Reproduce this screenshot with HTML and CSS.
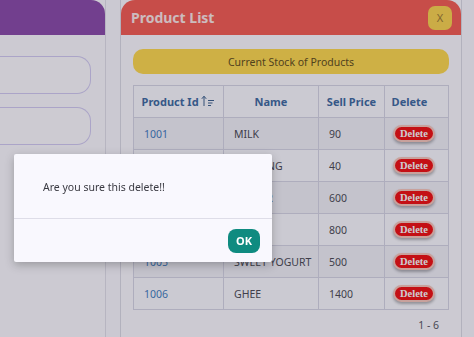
FILE: index.html
```html
<!DOCTYPE html>
<html lang="en">
<head>
    <meta charset="UTF-8">
    <meta name="viewport" content="width=device-width, initial-scale=1.0">
    <title>Product List</title>
    <link rel="stylesheet" href="styles.css">
</head>
<body>
    <div class="page">
        <div class="panel left-panel">
            <div class="panel-header purple"></div>
            <div class="panel-body">
                <div class="field"></div>
                <div class="field"></div>
            </div>
        </div>

        <div class="panel right-panel">
            <div class="panel-header red">
                <span class="panel-title">Product List</span>
                <button class="close-btn">X</button>
            </div>
            <div class="panel-body">
                <div class="stock-bar">Current Stock of Products</div>
                <table class="product-table">
                    <thead>
                        <tr>
                            <th class="col-id">Product Id
                                <svg class="sort-icon" width="14" height="12" viewBox="0 0 14 12">
                                    <path d="M3 11V1.5M0.8 3.8L3 1.2L5.2 3.8" fill="none" stroke="#3a5f8c" stroke-width="1"/>
                                    <path d="M7 5.5h6M7 8h4.5M7 10.5h3" fill="none" stroke="#3a5f8c" stroke-width="1"/>
                                </svg>
                            </th>
                            <th class="col-name">Name</th>
                            <th class="col-price">Sell Price</th>
                            <th class="col-del">Delete</th>
                        </tr>
                    </thead>
                    <tbody>
                        <tr><td class="pid">1001</td><td>MILK</td><td>90</td><td class="del-cell"><button class="del-btn">Delete</button></td></tr>
                        <tr><td class="pid">1002</td><td>PUDDING</td><td>40</td><td class="del-cell"><button class="del-btn">Delete</button></td></tr>
                        <tr><td class="pid">1003</td><td>BUTTER</td><td>600</td><td class="del-cell"><button class="del-btn">Delete</button></td></tr>
                        <tr><td class="pid">1004</td><td>CHEESE</td><td>800</td><td class="del-cell"><button class="del-btn">Delete</button></td></tr>
                        <tr><td class="pid">1005</td><td>SWEET YOGURT</td><td>500</td><td class="del-cell"><button class="del-btn">Delete</button></td></tr>
                        <tr><td class="pid">1006</td><td>GHEE</td><td>1400</td><td class="del-cell"><button class="del-btn">Delete</button></td></tr>
                    </tbody>
                </table>
                <div class="pager">1 - 6</div>
            </div>
        </div>
    </div>

    <div class="overlay"></div>

    <div class="dialog">
        <div class="dialog-body">Are you sure this delete!!</div>
        <div class="dialog-footer">
            <button class="ok-btn">OK</button>
        </div>
    </div>
</body>
</html>
```

FILE: styles.css
```css
* {
    margin: 0;
    padding: 0;
    box-sizing: border-box;
}

body {
    font-family: 'Noto Sans', 'Open Sans', sans-serif;
    background: #fbfaff;
    width: 474px;
    height: 337px;
    overflow: hidden;
}

.page {
    display: flex;
    gap: 14px;
    height: 337px;
}

.panel {
    display: flex;
    flex-direction: column;
    background: #fdfcff;
}

.left-panel {
    width: 106px;
    border-right: 1px solid #e2e1ea;
}

.right-panel {
    width: 342px;
    border-left: 1px solid #dcdbe5;
    border-right: 1px solid #dcdbe5;
}

.panel-header {
    height: 35px;
    display: flex;
    align-items: center;
    justify-content: space-between;
    padding: 0 9px 0 10px;
}

.panel-header.purple {
    background: #8a4aa8;
    border-top-right-radius: 14px;
}

.panel-header.red {
    background: #f65c50;
    border-top-left-radius: 14px;
    border-top-right-radius: 14px;
}

.panel-title {
    color: #fde9e6;
    font-size: 14px;
    font-weight: bold;
}

.close-btn {
    width: 24px;
    height: 24px;
    border: none;
    border-radius: 7px;
    background: #fbd54c;
    color: #9a7830;
    font-family: inherit;
    font-size: 11px;
}

.left-panel .panel-body {
    padding: 21px 14px 0 0;
    display: flex;
    flex-direction: column;
    gap: 13px;
}

.field {
    height: 38px;
    margin-left: -20px;
    border: 1px solid #d2cbf2;
    border-left: none;
    border-radius: 0 14px 14px 0;
    background: #fefdff;
}

.right-panel .panel-body {
    padding: 14px 12px 0 12px;
}

.stock-bar {
    height: 25px;
    border-radius: 10px;
    background: #ffda4b;
    color: #5e4c18;
    font-size: 10.5px;
    display: flex;
    align-items: center;
    justify-content: center;
}

.product-table {
    margin-top: 11px;
    width: 100%;
    border-collapse: collapse;
    font-size: 10.5px;
    border: 1px solid #d6d6e4;
}

.product-table th,
.product-table td {
    border: 1px solid #d6d6e4;
    height: 32px;
}

.product-table th {
    background: #fbfcff;
    color: #3d6aa0;
    font-weight: bold;
    font-size: 11px;
    text-align: center;
}

.col-id { width: 90px; }
.col-name { width: 95px; }
.col-price { width: 66px; }
.col-del { padding-right: 14px; }

.sort-icon {
    vertical-align: -1px;
}

.product-table td {
    padding-left: 10px;
    color: #4a4a52;
    background: #fcfcff;
}

.product-table tbody tr:nth-child(odd) td {
    background: #f2f2f8;
}

.product-table td.pid {
    color: #3f7cc0;
}

.product-table td.del-cell {
    padding-left: 0;
    text-align: center;
    padding-right: 5px;
}

.del-btn {
    background: #f20e0e;
    color: #fff;
    border: 2px solid #f8c7ba;
    border-radius: 9px;
    font-family: 'Liberation Serif', serif;
    font-weight: bold;
    font-size: 10.5px;
    padding: 0 5px;
    height: 17px;
    box-shadow: 0 2px 3px rgba(0, 0, 0, 0.3);
}

.pager {
    text-align: right;
    padding: 8px 10px 0 0;
    font-size: 10.5px;
    color: #555560;
}

.overlay {
    position: fixed;
    inset: 0;
    background: rgba(30, 28, 48, 0.22);
}

.dialog {
    position: fixed;
    left: 14px;
    top: 154px;
    width: 258px;
    background: #f9f8fe;
    border-radius: 2px;
    box-shadow: 0 3px 10px rgba(0, 0, 0, 0.25);
}

.dialog-body {
    height: 65px;
    padding: 26px 0 0 29px;
    font-size: 10.5px;
    color: #3a3a42;
    border-bottom: 1px solid #dedde8;
}

.dialog-footer {
    height: 43px;
    display: flex;
    justify-content: flex-end;
    align-items: center;
    padding-right: 12px;
}

.ok-btn {
    width: 32px;
    height: 24px;
    border: none;
    border-radius: 8px;
    background: #0f8b80;
    color: #fff;
    font-family: inherit;
    font-weight: bold;
    font-size: 11px;
}
```
